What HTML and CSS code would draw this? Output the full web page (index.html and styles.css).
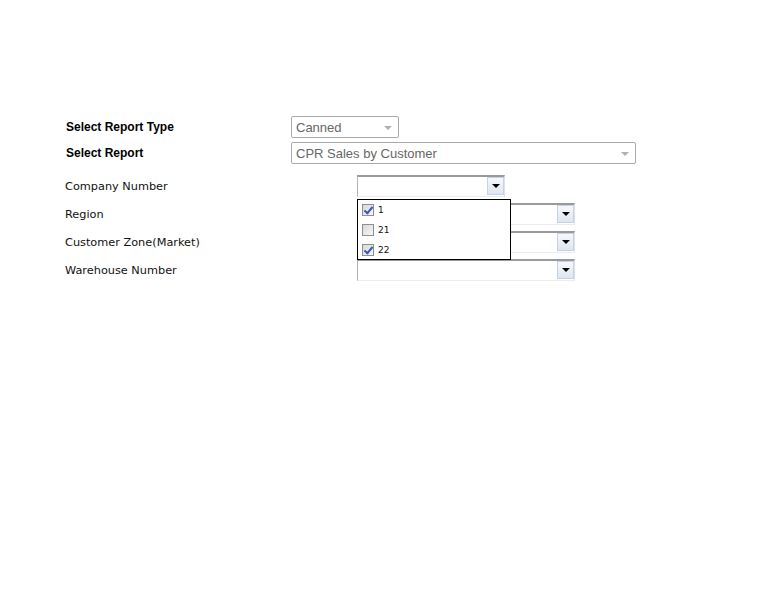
FILE: index.html
```html
<!DOCTYPE html>
<html lang="en">
<head>
    <meta charset="UTF-8">
    <title>Report Selection</title>
    <link rel="stylesheet" href="styles.css">
</head>
<body>
    <div class="page">

        <div class="report-head">
            <div class="head-label">Select Report Type</div>
            <div class="picker picker-type">
                <span class="picker-text">Canned</span>
                <i class="caret"></i>
            </div>

            <div class="head-label">Select Report</div>
            <div class="picker picker-report">
                <span class="picker-text">CPR Sales by Customer</span>
                <i class="caret"></i>
            </div>
        </div>

        <div class="filters">
            <div class="filter-label">Company Number</div>
            <div class="filter-cell">
                <div class="combo combo-short">
                    <span class="combo-btn"><i class="combo-arrow"></i></span>
                </div>
                <div class="check-list">
                    <label class="check-row"><span class="box checked"></span>1</label>
                    <label class="check-row"><span class="box"></span>21</label>
                    <label class="check-row"><span class="box checked"></span>22</label>
                </div>
            </div>

            <div class="filter-label">Region</div>
            <div class="filter-cell">
                <div class="combo">
                    <span class="combo-btn"><i class="combo-arrow"></i></span>
                </div>
            </div>

            <div class="filter-label">Customer Zone(Market)</div>
            <div class="filter-cell">
                <div class="combo">
                    <span class="combo-btn"><i class="combo-arrow"></i></span>
                </div>
            </div>

            <div class="filter-label">Warehouse Number</div>
            <div class="filter-cell">
                <div class="combo">
                    <span class="combo-btn"><i class="combo-arrow"></i></span>
                </div>
            </div>
        </div>

    </div>
</body>
</html>
```

FILE: styles.css
```css
* {
    margin: 0;
    padding: 0;
    box-sizing: border-box;
}

body {
    background: #fff;
    color: #000;
    font-family: "Liberation Sans", Arial, sans-serif;
}

.page {
    padding: 116px 0 0 65px;
}

/* top block: report type + report */

.report-head {
    display: grid;
    grid-template-columns: 226px auto;
    row-gap: 4px;
    align-items: center;
}

.head-label {
    font-weight: bold;
    font-size: 12px;
    padding-left: 1px;
}

.picker {
    position: relative;
    height: 22px;
    border: 1px solid #a9a9a9;
    border-radius: 2px;
    display: flex;
    align-items: center;
    padding-left: 4px;
}

.picker-type {
    width: 108px;
}

.picker-report {
    width: 345px;
}

.picker-text {
    font-size: 13px;
    color: #666;
}

.caret {
    position: absolute;
    right: 6px;
    top: 9px;
    width: 0;
    height: 0;
    border-left: 4px solid transparent;
    border-right: 4px solid transparent;
    border-top: 4px solid #b0b0b0;
}

/* filter rows */

.filters {
    margin-top: 11px;
    display: grid;
    grid-template-columns: 292px auto;
    row-gap: 6px;
    align-items: center;
}

.filter-label {
    font-family: "DejaVu Sans", Verdana, sans-serif;
    font-size: 11.3px;
    color: #111;
}

.filter-cell {
    position: relative;
}

.combo {
    position: relative;
    width: 218px;
    height: 22px;
    background: #fff;
    border-style: solid;
    border-width: 2px 1px 1px 1px;
    border-color: #9a9a9a #e2e2e2 #ececec #b4b4b4;
}

.combo-short {
    width: 148px;
}

.combo-btn {
    position: absolute;
    right: 0;
    top: 0;
    width: 17px;
    height: 18px;
    border: 1px solid #c6d2e4;
    background: linear-gradient(#f6f8fc, #dfe6f1);
    display: flex;
    align-items: center;
    justify-content: center;
}

.combo-arrow {
    width: 0;
    height: 0;
    border-left: 4px solid transparent;
    border-right: 4px solid transparent;
    border-top: 4px solid #000;
}

/* open checkbox dropdown */

.check-list {
    position: absolute;
    left: 0;
    top: 24px;
    z-index: 5;
    width: 154px;
    height: 61px;
    background: #fff;
    border: 1px solid #000;
    padding: 0 0 0 4px;
}

.check-row {
    display: flex;
    align-items: center;
    height: 20px;
    gap: 4px;
    font-family: "DejaVu Sans", Verdana, sans-serif;
    font-size: 9px;
    color: #111;
}

.box {
    position: relative;
    width: 12px;
    height: 12px;
    border: 1px solid #8e8f8f;
    background: linear-gradient(135deg, #d8d8d8, #f7f7f7);
}

.box.checked::after {
    content: "";
    position: absolute;
    left: 3px;
    top: 0px;
    width: 3px;
    height: 7px;
    border: solid #3a56b8;
    border-width: 0 2px 2px 0;
    transform: rotate(40deg);
}
```
